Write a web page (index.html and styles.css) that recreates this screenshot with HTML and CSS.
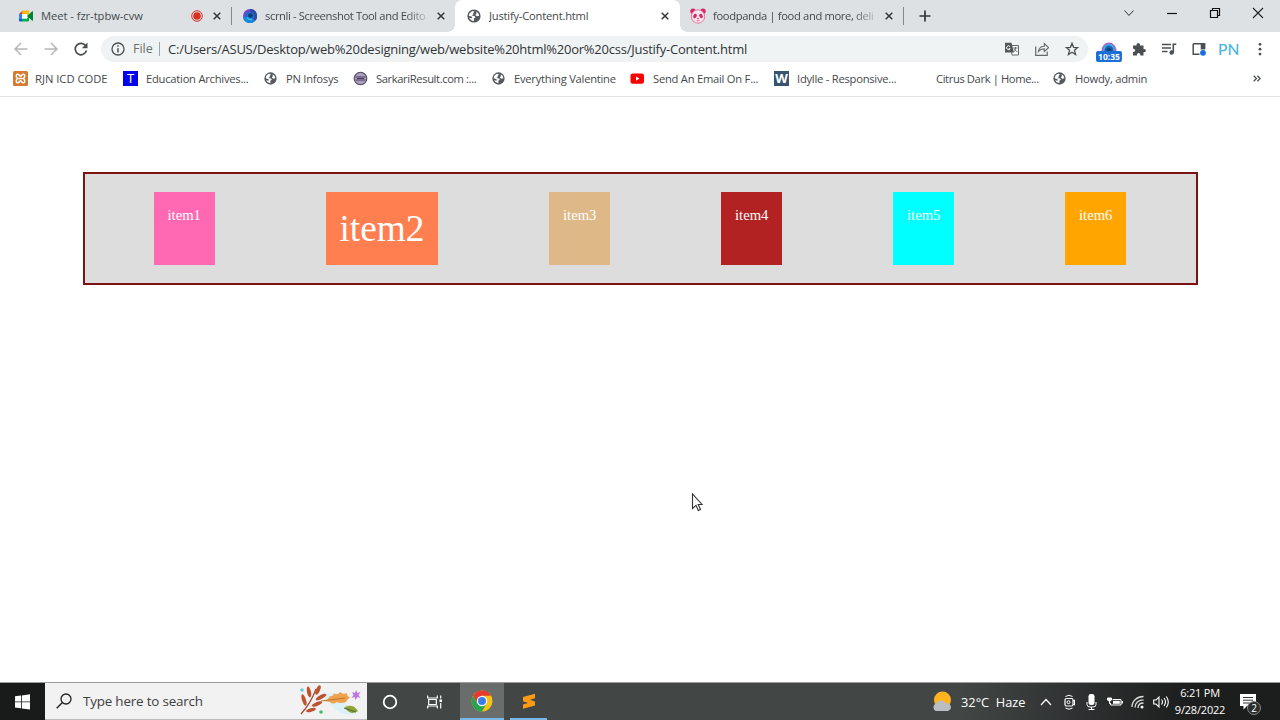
FILE: index.html
```
<!DOCTYPE html>
<html lang="en">
<head>
    <meta charset="UTF-8">
    <meta name="viewport" content="width=device-width, initial-scale=1.0">
    <title>Justify-Content.html</title>
    <link rel="stylesheet" href="styles.css">
</head>
<body>
    <!-- shared icons -->
    <svg width="0" height="0" class="defs">
        <symbol id="globe" viewBox="0 0 14 14">
            <circle cx="7" cy="7" r="6.600" fill="#55595d"/>
            <path d="M1.800 6.700Q2.200 3 6 2L7.500 2.800 6 4.200 6.300 5.600 4.600 6.400 7.500 7 8.500 8.400 6.800 9.500 7 12.100Q3.400 11.800 2.200 8.800L5 9.300 5 7.700zM9.300 2.500Q12 3.700 12.200 6.800L10 7.200 8.300 6 9.500 4.500z" fill="#fff"/>
        </symbol>
        <symbol id="close" viewBox="0 0 8 8">
            <path d="M.7.7l6.600 6.600M7.300.7L.7 7.300" stroke="#333638" stroke-width="1.500"/>
        </symbol>
    </svg>

    <div class="tabs">
        <div class="tab meet">
            <svg class="fav" viewBox="0 0 14 14">
                <path d="M0 5L3.500 1.500V5z" fill="#ea4335"/><path d="M0 5h3v5H0z" fill="#2684fc"/>
                <path d="M0 10h3v2.500H1A1 1 0 0 1 0 11.500z" fill="#0066da"/>
                <path d="M3.500 1.500H10V7L7.500 5H3.500z" fill="#ffba00"/><path d="M3 9.500h5L10 7v4.500a1 1 0 0 1-1 1H3z" fill="#00ac47"/>
                <path d="M3 5h5v4.500H3z" fill="#fff"/>
                <path d="M8 7l5-4.500q1-.5 1 .5v8q0 1-1 .4z" fill="#00832d"/>
            </svg>
            <span class="title">Meet - fzr-tpbw-cvw</span>
            <svg class="rec" viewBox="0 0 12 12"><circle cx="6" cy="6" r="5.300" fill="none" stroke="#d93025"/><circle cx="6" cy="6" r="3.800" fill="#d93025"/></svg>
            <svg class="x"><use href="#close"/></svg>
        </div>
        <div class="tab scrn">
            <svg class="fav" viewBox="0 0 14 14">
                <circle cx="7" cy="7" r="7" fill="#7146cf"/><path d="M7 0a7 7 0 0 1 5 12L7 7z" fill="#304a9d"/><path d="M0 8a7 7 0 0 0 12 4L7 7z" fill="#1689dc"/>
                <circle cx="7" cy="7" r="4.300" fill="#1473cc"/><circle cx="7.500" cy="6.500" r="2.300" fill="#143b79"/><path d="M4 8.500q2 3 5 1.500" stroke="#29c4e8" stroke-width="1.500" fill="none"/>
            </svg>
            <span class="title fade">scrnli - Screenshot Tool and Edito</span>
            <svg class="x"><use href="#close"/></svg>
        </div>
        <div class="tab active">
            <svg class="fav"><use href="#globe"/></svg>
            <span class="title">Justify-Content.html</span>
            <svg class="x"><use href="#close"/></svg>
        </div>
        <div class="tab panda">
            <svg class="fav" viewBox="0 0 16 16">
                <circle cx="3" cy="3.300" r="2.700" fill="#d72768"/><circle cx="13" cy="3.300" r="2.700" fill="#d72768"/>
                <circle cx="8" cy="8.500" r="6.700" fill="#fbe3ec" stroke="#df5f92" stroke-width=".8"/>
                <ellipse cx="5" cy="8" rx="1.700" ry="2.300" transform="rotate(30 5 8)" fill="#d72768"/><ellipse cx="11" cy="8" rx="1.700" ry="2.300" transform="rotate(-30 11 8)" fill="#d72768"/>
                <path d="M6.800 10h2.400L8 11.500zM6 12.500q2 1.500 4 0" fill="#d72768"/>
            </svg>
            <span class="title fade">foodpanda | food and more, deli</span>
            <svg class="x"><use href="#close"/></svg>
        </div>
        <svg class="plus" viewBox="0 0 12 12"><path d="M6 .5v11M.5 6h11" stroke="#333638" stroke-width="1.700"/></svg>
        <div class="window-buttons">
            <svg viewBox="0 0 12 12"><path d="M1.500 3.500L6 8.500l4.500-5" fill="none" stroke="#333"/></svg>
            <svg viewBox="0 0 12 12"><path d="M1 6.500h10" stroke="#111" stroke-width="1.200"/></svg>
            <svg viewBox="0 0 12 12"><path d="M1.500 3.500h7v7h-7zM3.500 3.500v-2h7v7h-2" fill="none" stroke="#111" stroke-width="1.200"/></svg>
            <svg viewBox="0 0 12 12"><path d="M1 1l10 10M11 1L1 11" stroke="#222" stroke-width="1.100"/></svg>
        </div>
    </div>

    <div class="toolbar">
        <svg class="nav" viewBox="0 0 14 14"><path d="M13.500 7H1M7 1L1 7l6 6" fill="none" stroke="#b4b6b8" stroke-width="1.500"/></svg>
        <svg class="nav" viewBox="0 0 14 14"><path d="M.5 7H13M7 1l6 6-6 6" fill="none" stroke="#b4b6b8" stroke-width="1.500"/></svg>
        <svg class="nav" viewBox="0 0 14 14"><path d="M11.800 4A5.700 5.700 0 1 0 12.500 8.500" fill="none" stroke="#4b4f52" stroke-width="1.700"/><path d="M13.500.5v5.700H7.800z" fill="#4b4f52"/></svg>
        <div class="address">
            <svg class="info" viewBox="0 0 14 14"><circle cx="7" cy="7" r="6" fill="none" stroke="#4b4f52" stroke-width="1.300"/><path d="M7 6.200v4.300M7 3.300v1.500" stroke="#4b4f52" stroke-width="1.500"/></svg>
            <span class="scheme">File</span>
            <span class="url">C:/Users/ASUS/Desktop/web%20designing/web/website%20html%20or%20css/Justify-Content.html</span>
            <div class="address-icons">
                <svg viewBox="0 0 14 14"><path d="M5.500 3.500h8v9.500H7z" fill="#fff" stroke="#65696c"/><path d="M0 .8h6.500L9 10.500H0z" fill="#54585b"/><path d="M5 4.500a1.900 1.900 0 1 0 .2 2.200H3.700" stroke="#fff" fill="none"/><path d="M8.200 6h4.500M10.500 5v1c0 2-1 3-2 4M9.500 7q1 2 3 3" stroke="#65696c" fill="none"/></svg>
                <svg viewBox="0 0 14 14"><path d="M.7 4.500v8.800h11.500V9.500" fill="none" stroke="#65696c" stroke-width="1.200"/><path d="M3.500 9.500C4 6 6 4.200 9.300 4.200V1.500L13.500 5.600 9.300 9.500V6.900C6.500 6.900 5 7.600 3.500 9.500z" fill="none" stroke="#65696c" stroke-width="1.100"/></svg>
                <svg viewBox="0 0 14 14"><path d="M7 1.300l1.600 4 4.200.2-3.300 2.800 1.100 4.200L7 10.200l-3.600 2.300 1.100-4.200L1.200 5.500l4.200-.2z" fill="none" stroke="#4b4f52" stroke-width="1.300"/></svg>
            </div>
        </div>
        <div class="recorder">
            <svg viewBox="0 0 18 10"><path d="M1.500 10a7.500 8.500 0 0 1 15 0z" fill="#a562ca"/><path d="M3 10a6 7 0 0 1 12 0z" fill="#35b5e8"/><path d="M4.500 10a4.500 5.500 0 0 1 9 0z" fill="#155fae"/><path d="M6.500 10a2.500 3 0 0 1 5 0z" fill="#153b70"/></svg>
            <span>10:35</span>
        </div>
        <div class="extensions">
            <svg viewBox="0 0 14 14"><path d="M1 3.500h3.500V2.700a1.700 1.700 0 0 1 3.500 0v.8h3.500V7h.8a1.600 1.600 0 0 1 0 3.200h-.8v3.300H8.300v-.8a1.700 1.700 0 0 0-3.400 0v.8H1v-3.600h.6a1.600 1.600 0 0 0 0-3.200H1z" fill="#4b4f52"/></svg>
            <svg viewBox="0 0 14 14"><path d="M0 2.500h9M0 6h9M0 9.500h5.500M11.300 10V2.200h3" fill="none" stroke="#4b4f52" stroke-width="1.600"/><circle cx="9.700" cy="10.500" r="2.200" fill="#4b4f52"/></svg>
            <svg viewBox="0 0 14 14"><path d="M1.200 1.700h11.300V7M7.500 12.300H1.200V1.700" fill="none" stroke="#4b4f52" stroke-width="1.500"/><path d="M8.700 1h4.500v6.500H8.700z" fill="#4b4f52"/><circle cx="11" cy="10.800" r="2.900" fill="#1a6fe0"/></svg>
        </div>
        <span class="pn">PN</span>
        <svg class="dots" viewBox="0 0 4 14"><g fill="#4b4f52"><circle cx="2" cy="2.300" r="1.400"/><circle cx="2" cy="7.200" r="1.400"/><circle cx="2" cy="12.100" r="1.400"/></g></svg>
    </div>

    <div class="bookmarks">
        <div class="bookmark caps">
            <svg viewBox="0 0 15 15"><rect width="15" height="15" rx="1.500" fill="#d77a31"/><path d="M4.700 3.200C2.800 3.200 2.800 6 4.500 7.500 2.800 9 2.800 11.800 4.700 11.800S6.500 9.700 7.500 9.700s.9 2.100 2.800 2.100 1.900-2.800.2-4.300c1.700-1.500 1.700-4.300-.2-4.300S8.500 5.300 7.500 5.300 6.600 3.200 4.700 3.200zM5.500 7.500h4" fill="none" stroke="#fff" stroke-width="1.500"/></svg>
            <span>RJN ICD CODE</span>
        </div>
        <div class="bookmark">
            <span class="square blue">T</span>
            <span>Education Archives...</span>
        </div>
        <div class="bookmark"><svg class="site"><use href="#globe"/></svg><span>PN Infosys</span></div>
        <div class="bookmark">
            <svg viewBox="0 0 15 15"><circle cx="7.500" cy="7.500" r="6.300" fill="#aaa0bd" stroke="#514861" stroke-width="1.100"/><path d="M2.500 6h10M2.500 9h10M4 7.500h7" stroke="#493e5b"/></svg>
            <span class="tight">SarkariResult.com :...</span>
        </div>
        <div class="bookmark"><svg class="site"><use href="#globe"/></svg><span>Everything Valentine</span></div>
        <div class="bookmark">
            <svg viewBox="0 0 15 15"><rect x=".5" y="2.500" width="13.500" height="10.300" rx="2.300" fill="#f00"/><path d="M6 5.500v4.300l3.500-2.200z" fill="#fff"/></svg>
            <span>Send An Email On F...</span>
        </div>
        <div class="bookmark"><span class="square slate">W</span><span>Idylle - Responsive...</span></div>
        <div class="bookmark"><span class="blank"></span><span class="tight">Citrus Dark | Home...</span></div>
        <div class="bookmark"><svg class="site"><use href="#globe"/></svg><span>Howdy, admin</span></div>
        <svg class="more" viewBox="0 0 8 7"><path d="M.7.700l2.800 2.800L.7 6.300M4.400.700l2.800 2.800-2.800 2.800" fill="none" stroke="#4b4f52" stroke-width="1.300"/></svg>
    </div>

    <div class="page">
        <div class="container">
            <div class="item item1">item1</div>
            <div class="item item2">item2</div>
            <div class="item item3">item3</div>
            <div class="item item4">item4</div>
            <div class="item item5">item5</div>
            <div class="item item6">item6</div>
        </div>
        <svg class="cursor" viewBox="0 0 12 20"><path d="M1.500 1v14.500L5 12.300l2.300 5.200 2.200-1-2.300-5H11z" fill="#fff" stroke="#333" stroke-width="1.100"/></svg>
    </div>

    <div class="taskbar">
        <div class="start"><svg viewBox="0 0 15 16"><path d="M0 2.300L6 1.500v6H0zM6.800 1.400L15 .2v7.300H6.800zM0 8.300h6v6L0 13.500zM6.800 8.300H15v7.300l-8.200-1.200z" fill="#fff"/></svg></div>
        <div class="search">
            <svg class="glass" viewBox="0 0 16 16"><circle cx="10" cy="6" r="5" fill="none" stroke="#222" stroke-width="1.300"/><path d="M6.400 9.600L.7 15.300" stroke="#222" stroke-width="1.400"/></svg>
            <span>Type here to search</span>
            <svg class="leaves" viewBox="0 0 62 32">
                <path d="M23 10q20-5 23 8 5 5 10 11-12 3-22-7z" fill="#daf1f8"/>
                <path d="M2 29Q12 18 17 4" fill="none" stroke="#9b442d" stroke-width="1.200"/>
                <g fill="#bd5330"><ellipse cx="19" cy="5" rx="2" ry="5" transform="rotate(24 19 5)"/><ellipse cx="10" cy="7" rx="2" ry="5.500" transform="rotate(-12 10 7)"/><ellipse cx="5" cy="15" rx="2" ry="6" transform="rotate(-18 5 15)"/><ellipse cx="22" cy="12" rx="2" ry="6" transform="rotate(62 22 12)"/><ellipse cx="18" cy="19" rx="2" ry="5.500" transform="rotate(68 18 19)"/><ellipse cx="12" cy="25" rx="1.700" ry="5" transform="rotate(75 12 25)"/></g>
                <path d="M25 16q4-1 6-5 3 1 4-3 3 3 6-1 3 3 7 1 0 4 3 4-3 3-4 5-6 2-9 0-4 3-7 0z" fill="#efa24b"/><path d="M22 16l24-3" stroke="#bd7731"/>
                <path d="M46 22q8-4 13 4-7 5-12-2z" fill="#91a43a"/><path d="M45 23l12 4" stroke="#516927"/>
                <path d="M53 7l3 1 1-3 1.500 3 3-1-2 3 2 3-3-1-2 3-1-3-3 1 2-3z" fill="#bd78e1"/>
                <circle cx="3" cy="5" r="1.800" fill="#69cbd4"/><circle cx="22" cy="27" r="1.800" fill="#43bd74"/>
            </svg>
        </div>
        <div class="task"><svg viewBox="0 0 16 16"><circle cx="8" cy="8" r="6.300" fill="none" stroke="#fff" stroke-width="1.800"/></svg></div>
        <div class="task view"><svg viewBox="0 0 16 16"><path d="M.7 1.500V4h9.600V1.500M1.700 5.500h7.600v5H1.700zM.7 14.500V12h9.600v2.500M13.700 1.500v3M13.700 9v5.500" fill="none" stroke="#fff" stroke-width="1.200"/><path d="M12.500 5.500H15V8h-2.500z" fill="#fff"/></svg></div>
        <div class="task chrome">
            <svg viewBox="0 0 22 22"><circle cx="11" cy="11" r="10.500" fill="#fbc116"/><path d="M1.900 5.700A10.500 10.500 0 0 1 20.100 5.700H11L6.500 13.600z" fill="#e33b2e"/><path d="M1.900 5.700A10.500 10.500 0 0 0 11 21.500l4.600-7.900-4.600 2.500-4.500-2.500z" fill="#29a352"/><circle cx="11" cy="11" r="5.200" fill="#fff"/><circle cx="11" cy="11" r="4" fill="#3b7de8"/></svg>
        </div>
        <div class="task sublime">
            <svg viewBox="0 0 14 16"><path d="M1 4L13 .8V5.200L8 6.700l5 1.700v4L1 15.800v-4.400l5-1.500-5-1.600z" fill="#ff9b13"/></svg>
        </div>
        <div class="tray">
            <svg class="weather" viewBox="0 0 22 22"><circle cx="11.500" cy="9" r="8.500" fill="#ffb321"/><path d="M5 20a4 4 0 0 1 0-7.500 5.500 5.500 0 0 1 9.500-.3A4 4 0 1 1 17 20z" fill="#b9bec2"/></svg>
            <span class="temp">32°C&nbsp; Haze</span>
            <svg class="caret" viewBox="0 0 12 8"><path d="M1 7l5-5.500L11 7" fill="none" stroke="#fff" stroke-width="1.200"/></svg>
            <div class="status">
                <svg viewBox="0 0 16 16"><rect x="4" y="4.500" width="8" height="7.500" rx="1.500" fill="none" stroke="#fff" stroke-width="1.200"/><circle cx="7.500" cy="8.200" r="1.500" fill="none" stroke="#fff"/><path d="M12 7l1.500-1v5L12 10M4.500 2.500Q8 0 11.500 2.500M4.500 14Q8 16.500 11.500 14" fill="none" stroke="#fff"/></svg>
                <svg viewBox="0 0 16 16"><rect x="4.500" y="0" width="6" height="11" rx="2.300" fill="#fff"/><path d="M3 8v2.500q0 2.500 3 2.500h3q3 0 3-2.500V8M7.500 13v2.500M4.500 15.500h6" fill="none" stroke="#fff"/></svg>
                <svg viewBox="0 0 16 16"><path d="M5.500 5.500h8.500v5.500H3.500V9" fill="none" stroke="#fff"/><path d="M6 6.800h6.800v3H6z" fill="#fff"/><path d="M14.500 7H16v2.500h-1.500z" fill="#fff"/><path d="M.5 4h4v2q-2 2.500-4 0zM2.500 7v2.500h1" fill="#fff" stroke="#fff"/></svg>
                <svg viewBox="0 0 16 16"><path d="M2 13C2 7 7 2.500 13.500 2.500M5 13.500C5 9 8.500 5.800 13.500 5.800M8 14c0-3 2-5 5.500-5" fill="none" stroke="#ddd" stroke-width="1.300"/><circle cx="12" cy="13" r="1.500" fill="#fff"/></svg>
                <svg viewBox="0 0 16 16"><path d="M.7 6v4H3l3 3V3L3 6zM8.500 5.500q2 2.500 0 5M11 4q3 4 0 8M13.300 2.500q4 5.500 0 11" fill="none" stroke="#fff" stroke-width="1.100"/></svg>
            </div>
            <div class="clock"><span>6:21 PM</span><span>9/28/2022</span></div>
            <div class="notice">
                <svg viewBox="0 0 16 16"><path d="M0 0h16v12H7l-3.500 3.500V12H0z" fill="#fff"/><path d="M3 3.500h10M3 6.200h10M3 9h7" stroke="#333"/></svg>
                <span>2</span>
            </div>
        </div>
    </div>
</body>
</html>
```
FILE: styles.css
```
* {
    box-sizing: border-box;
}
body {
    margin: 0;
    height: 720px;
    display: flex;
    flex-direction: column;
    overflow: hidden;
    background: #fff;
    color: #45494c;
    font-family: "Open Sans", "Noto Sans", sans-serif;
    font-size: 11.2px;
}
svg {
    display: block;
    flex: none;
}
.defs {
    position: absolute;
}
.tabs {
    display: flex;
    height: 32px;
    background: #dde1e4;
}
.tab {
    display: flex;
    align-items: center;
    height: 32px;
    position: relative;
}
.tab .title {
    flex: 1;
    overflow: hidden;
    white-space: nowrap;
    margin-left: 8px;
    padding-bottom: 1px;
    letter-spacing: -0.22px;
}
.tab.meet .title {
    letter-spacing: -0.05px;
}
.fav {
    width: 14px;
    height: 14px;
}
.x {
    width: 8px;
    height: 8px;
}
.fade {
    -webkit-mask-image: linear-gradient(90deg, #000 84%, transparent);
    mask-image: linear-gradient(90deg, #000 84%, transparent);
}
.meet {
    width: 232px;
    padding: 0 11px 0 19px;
}
.meet::after, .panda::after {
    content: "";
    position: absolute;
    right: 0;
    top: 7px;
    width: 1px;
    height: 18px;
    background: #85898c;
}
.rec {
    width: 12px;
    height: 12px;
    margin-right: 10px;
}
.scrn {
    width: 223px;
    padding: 0 10px 0 11px;
}
.scrn .title {
    margin-right: 5px;
}
.tab.scrn .title {
    letter-spacing: -0.38px;
}
.active {
    width: 225px;
    padding: 0 11px 0 12px;
    background: #fff;
    border-radius: 7px 7px 0 0;
}
.active::before, .active::after {
    content: "";
    position: absolute;
    bottom: 0;
    width: 7px;
    height: 7px;
}
.active::before {
    left: -7px;
    background: radial-gradient(circle at 0 0, transparent 6.5px, #fff 7px);
}
.active::after {
    right: -7px;
    background: radial-gradient(circle at 100% 0, transparent 6.5px, #fff 7px);
}
.panda {
    width: 224px;
    padding: 0 11px 0 10px;
}
.panda .fav {
    width: 16px;
    height: 16px;
}
.panda .title {
    margin: 0 5px 0 7px;
}
.tab.panda .title {
    letter-spacing: -0.35px;
}
.plus {
    width: 12px;
    height: 12px;
    margin: 10px 0 0 15px;
}
.window-buttons {
    display: flex;
    gap: 31px;
    margin: 7px 16px 0 auto;
}
.window-buttons svg {
    width: 12px;
    height: 12px;
}
.toolbar {
    display: flex;
    align-items: center;
    height: 33px;
    padding-left: 14px;
}
.nav {
    width: 14px;
    height: 14px;
    margin-right: 16px;
}
.address {
    width: 987px;
    height: 26px;
    margin-left: -3px;
    padding: 0 9px 0 10px;
    border-radius: 13px;
    background: #f0f3f3;
    display: flex;
    align-items: center;
    font-size: 13px;
}
.info {
    width: 14px;
    height: 14px;
}
.scheme {
    width: 27px;
    margin-left: 8px;
    border-right: 1px solid #a0a4a6;
    color: #6b6f72;
    font-size: 12.5px;
    line-height: 14px;
}
.url {
    margin-left: 8px;
    color: #303437;
    white-space: nowrap;
    letter-spacing: -0.235px;
}
.address-icons {
    display: flex;
    gap: 16px;
    margin-left: auto;
}
.address-icons svg {
    width: 14px;
    height: 14px;
}
.recorder {
    width: 26px;
    margin-left: 8px;
    display: flex;
    flex-direction: column;
    align-items: center;
    padding-top: 5px;
}
.recorder svg {
    width: 18px;
    height: 10px;
}
.recorder span {
    width: 26px;
    height: 11px;
    border-radius: 2px;
    background: #1b6fd5;
    color: #fff;
    font-size: 8.5px;
    font-weight: bold;
    line-height: 11px;
    text-align: center;
}
.extensions {
    display: flex;
    gap: 16px;
    margin-left: 10px;
}
.extensions svg {
    width: 14px;
    height: 14px;
    overflow: visible;
}
.pn {
    width: 22px;
    margin-left: 12px;
    color: #45b3e5;
    font: 500 15.5px/20px Lato, sans-serif;
}
.dots {
    width: 4px;
    height: 14px;
    margin-left: 18px;
}
.bookmarks {
    display: grid;
    grid-template-columns: 110px 140px 90px 138px 139px 144px 139px 139px 201px 8px;
    align-items: center;
    height: 32px;
    padding: 0 0 4px 13px;
    border-bottom: 1px solid #e1e3e4;
    white-space: nowrap;
    letter-spacing: -0.24px;
}
.bookmark {
    display: flex;
    align-items: center;
    gap: 8px;
}
.bookmark.caps {
    gap: 7px;
    letter-spacing: 0;
}
.tight {
    letter-spacing: -0.38px;
}
.bookmark svg, .square, .blank {
    width: 15px;
    height: 15px;
    flex: none;
}
.bookmark .site {
    width: 13px;
    height: 13px;
    margin: 0 1px;
}
.square {
    color: #fff;
    text-align: center;
    line-height: 15px;
    font-size: 13px;
}
.blue {
    background: #0000ee;
}
.slate {
    background: #38536d;
    font-weight: bold;
}
.more {
    width: 8px;
    height: 7px;
}
.page {
    flex: 1;
    position: relative;
    padding: 75px 82.5px 0 82.5px;
}
.container {
    height: 113px;
    border: 2px solid #7c1212;
    background: #ddd;
    padding: 18px 69px;
    display: flex;
    justify-content: space-between;
}
.item {
    height: 73px;
    padding: 15px 14px 0;
    color: #fff;
    font: 14.7px/17px "Liberation Serif", serif;
}
.item1 {
    background: hotpink;
}
.item2 {
    background: coral;
    font-size: 37.3px;
    line-height: 44px;
}
.item3 {
    background: burlywood;
}
.item4 {
    background: #b22222;
}
.item5 {
    background: aqua;
}
.item6 {
    background: orange;
}
.cursor {
    position: absolute;
    left: 691px;
    top: 396px;
    width: 12px;
    height: 20px;
}
.taskbar {
    height: 38px;
    display: flex;
    color: #fff;
    background: linear-gradient(90deg, #424645 0, #424645 75%, #1c1e1e 93%);
    border-top: 1px solid #9a9d9c;
}
.start {
    width: 45px;
    display: flex;
    align-items: center;
    justify-content: center;
    background: #191b1b;
}
.start svg {
    width: 15px;
    height: 16px;
}
.search {
    width: 322px;
    display: flex;
    align-items: center;
    padding: 0 6px 0 11px;
    background: #f2f2f2;
    border-bottom: 1px solid #bbb;
    color: #3d4040;
    font-size: 13.4px;
    letter-spacing: -0.18px;
}
.glass {
    width: 16px;
    height: 16px;
    margin-right: 11px;
}
.leaves {
    width: 62px;
    height: 32px;
    margin-left: auto;
}
.task {
    width: 45px;
    display: flex;
    align-items: center;
    justify-content: center;
}
.task svg {
    width: 16px;
    height: 16px;
}
.task.view {
    width: 48px;
    padding-right: 2px;
}
.task.chrome {
    width: 44px;
    background: #696d6c;
    border-bottom: 2px solid #76b8e8;
}
.chrome svg {
    width: 22px;
    height: 22px;
}
.task.sublime {
    width: 37px;
    margin-left: 6px;
    border-bottom: 2px solid #76b8e8;
}
.tray {
    flex: 1;
    display: flex;
    align-items: center;
}
.weather {
    width: 22px;
    height: 22px;
    margin-left: 384px;
}
.temp {
    width: 71px;
    margin-left: 8px;
    font-size: 12.8px;
    white-space: nowrap;
}
.caret {
    width: 12px;
    height: 8px;
    margin-left: 8px;
}
.status {
    display: flex;
    gap: 7px;
    margin-left: 9px;
}
.status svg {
    width: 16px;
    height: 16px;
}
.clock {
    width: 50px;
    margin-left: 6px;
    padding-bottom: 2px;
    display: flex;
    flex-direction: column;
    align-items: center;
    font-size: 11px;
    line-height: 17px;
    letter-spacing: -0.2px;
    white-space: nowrap;
}
.notice {
    position: relative;
    margin-left: 15px;
}
.notice svg {
    width: 16px;
    height: 16px;
}
.notice span {
    position: absolute;
    left: 7px;
    top: 7px;
    width: 14px;
    height: 14px;
    border: 1px solid #888;
    border-radius: 50%;
    background: #2c2e2e;
    font-size: 10px;
    line-height: 12px;
    text-align: center;
}
```
